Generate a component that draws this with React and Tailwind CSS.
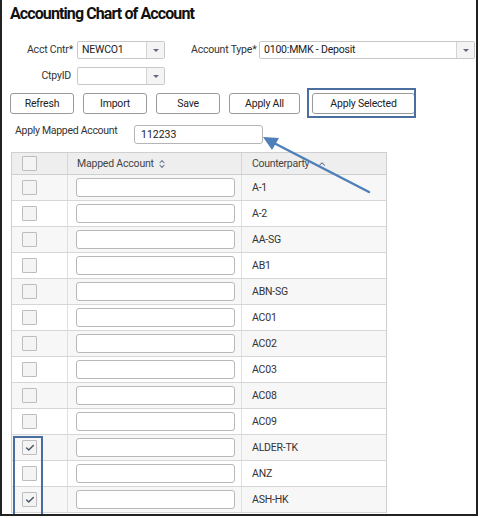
import React from 'react'
import { ChevronsUpDown, ChevronUp, Check } from 'lucide-react'

const rows = [
  { cp: 'A-1' },
  { cp: 'A-2' },
  { cp: 'AA-SG' },
  { cp: 'AB1' },
  { cp: 'ABN-SG' },
  { cp: 'AC01' },
  { cp: 'AC02' },
  { cp: 'AC03' },
  { cp: 'AC08' },
  { cp: 'AC09' },
  { cp: 'ALDER-TK', checked: true },
  { cp: 'ANZ' },
  { cp: 'ASH-HK', checked: true }
]

const Select = ({ value, className }) => (
  <div className={`flex h-[18px] border border-[#c8c8c8] rounded-[2px] bg-white ${className}`}>
    <div className="flex-1 px-[4px] text-[10.5px] tracking-[-0.2px] leading-[16px] text-[#222] whitespace-nowrap">{value}</div>
    <div className="w-[18px] border-l border-[#d4d4d4] bg-[#f4f4f4] flex items-center justify-center">
      <div className="w-0 h-0 border-l-[3px] border-r-[3px] border-t-[3px] border-l-transparent border-r-transparent border-t-[#667]" />
    </div>
  </div>
)

const Box = ({ checked }) => (
  <div className="w-[15px] h-[15px] border border-[#bdbdbd] bg-[#f4f4f4] rounded-[1px] flex items-center justify-center">
    {checked && <Check className="w-[10px] h-[10px] text-[#4a5566]" strokeWidth={3.5} />}
  </div>
)

const Btn = ({ label, className }) => (
  <button className={`h-[21px] border border-[#9a9a9a] rounded-[3px] bg-white text-[10.5px] tracking-[-0.2px] text-[#222] ${className}`}>
    {label}
  </button>
)

const App = () => {
  return (
    <div className="relative w-[478px] h-[516px] bg-white border-l-2 border-r-2 border-b-2 border-[#222] overflow-hidden font-['Roboto',sans-serif] text-[#333]">
      {/* Title */}
      <h1 className="pl-[8px] pt-[3px] text-[16px] leading-[22px] font-bold text-[#111] tracking-[-0.9px] whitespace-nowrap">
        Accounting Chart of Account
      </h1>

      {/* Filters */}
      <div className="flex items-center mt-[16px] h-[18px] text-[10.5px] tracking-[-0.2px] whitespace-nowrap">
        <div className="w-[71px] text-right text-[#333]">Acct Cntr*</div>
        <Select value="NEWCO1" className="ml-[4px] w-[88px]" />
        <div className="ml-[26px] w-[66px] text-[#333]">Account Type*</div>
        <Select value="0100:MMK - Deposit" className="ml-[2px] w-[216px]" />
      </div>
      <div className="flex items-center mt-[8px] h-[18px] text-[10.5px] tracking-[-0.2px]">
        <div className="w-[69px] text-right text-[#333]">CtpyID</div>
        <Select value="" className="ml-[6px] w-[88px]" />
      </div>

      {/* Buttons */}
      <div className="flex items-center mt-[8px] pl-[8px]">
        <Btn label="Refresh" className="w-[64px]" />
        <Btn label="Import" className="ml-[9px] w-[64px]" />
        <Btn label="Save" className="ml-[9px] w-[64px]" />
        <Btn label="Apply All" className="ml-[9px] w-[71px]" />
        <Btn label="Apply Selected" className="ml-[12px] w-[103px]" />
      </div>

      {/* Apply mapped account */}
      <div className="flex items-start mt-[10px] pl-[13px]">
        <div className="w-[119px] text-[10.5px] tracking-[-0.3px] leading-[13px] text-[#333] whitespace-nowrap">Apply Mapped Account</div>
        <div className="mt-[1px] w-[129px] h-[19px] border border-[#b5b5b5] rounded-[3px] px-[6px] text-[10.5px] leading-[17px] text-[#222]">
          112233
        </div>
      </div>

      {/* Table */}
      <div className="mt-[8px] ml-[9px] w-[376px] border-l border-r border-t border-[#cfcfcf]">
        <div className="flex h-[22px] bg-[#eeeeee] border-b border-[#cfcfcf]">
          <div className="w-[56px] border-r border-[#d6d6d6] flex items-center pl-[10px]">
            <Box />
          </div>
          <div className="w-[174px] border-r border-[#d6d6d6] flex items-center pl-[9px] text-[10.5px] tracking-[-0.2px] text-[#444]">
            Mapped Account
            <ChevronsUpDown className="ml-[3px] w-[10px] h-[10px] text-[#5b6f8a]" strokeWidth={2.5} />
          </div>
          <div className="flex-1 flex items-center pl-[10px] text-[10.5px] tracking-[-0.3px] text-[#444]">
            Counterparty
            <ChevronUp className="ml-[8px] w-[10px] h-[10px] text-[#5b6f8a]" strokeWidth={2.5} />
          </div>
        </div>
        {rows.map((row, index) => (
          <div
            key={index}
            className={`flex h-[26px] border-b border-[#d6d6d6] ${index % 2 === 0 ? 'bg-[#f7f7f7]' : 'bg-white'}`}
          >
            <div className="w-[56px] border-r border-[#e0e0e0] flex items-center pl-[10px]">
              <Box checked={row.checked} />
            </div>
            <div className="w-[174px] border-r border-[#e0e0e0] flex items-center pl-[8px]">
              <div className="w-[159px] h-[19px] border border-[#b8b8b8] rounded-[3px] bg-white" />
            </div>
            <div className="flex-1 flex items-center pl-[10px] text-[10.5px] tracking-[-0.2px] text-[#333]">{row.cp}</div>
          </div>
        ))}
      </div>

      {/* Annotations */}
      <div className="absolute left-[305px] top-[88px] w-[109px] h-[30px] border-2 border-[#4a6ea0]" />
      <div className="absolute left-[11px] top-[436px] w-[30px] h-[80px] border-2 border-[#4a6ea0]" />
      <svg className="absolute left-0 top-0" width="478" height="516" viewBox="0 0 478 516">
        <line x1="367" y1="192" x2="270" y2="142" stroke="#4f7fb8" strokeWidth="2.5" strokeLinecap="round" />
        <polygon points="261,137 277,138 270,150" fill="#4f7fb8" />
      </svg>
    </div>
  )
}

export default App
